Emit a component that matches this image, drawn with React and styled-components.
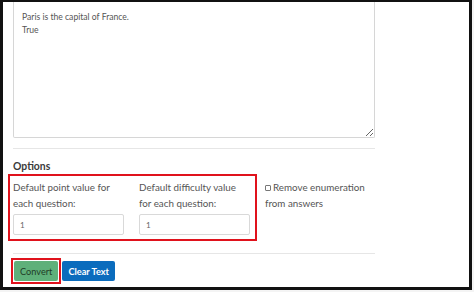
import React from "react";
import styled, { createGlobalStyle } from "styled-components";

const Global = createGlobalStyle`
  html, body { margin: 0; padding: 0; background: #f4f4f4; }
  body { font-family: Lato, "Open Sans", sans-serif; }
  * { box-sizing: border-box; }
`;

const Frame = styled.div`
  width: 472px;
  height: 290px;
  border: 3px solid #111;
  border-top-width: 2px;
  background: #fff;
  overflow: hidden;
`;

const Column = styled.div`
  width: 372px;
  padding: 0 0 0 10px;
  display: flex;
  flex-direction: column;
`;

const TextArea = styled.textarea`
  display: block;
  width: 362px;
  height: 136px;
  margin: 0;
  padding: 9px 8px;
  border: 1px solid #d6d6d6;
  border-top: none;
  border-radius: 0 0 2px 2px;
  font-family: Lato, sans-serif;
  font-size: 8.6px;
  line-height: 13px;
  color: #555;
  resize: vertical;
  outline: none;
`;

const Rule = styled.hr`
  width: 362px;
  margin: ${(p) => p.$mt}px 0 0 0;
  border: none;
  border-top: 1px solid #e6e6e6;
  height: 0;
`;

const Heading = styled.div`
  margin-top: 10px;
  font-size: 10.4px;
  font-weight: 700;
  color: #3a3a3a;
  line-height: 14px;
`;

const OptionsRow = styled.div`
  display: flex;
  align-items: flex-start;
  margin-top: 1px;
  gap: 8px;
`;

const Highlight = styled.div`
  display: flex;
  gap: 15px;
  margin-left: -5px;
  padding: 2px 5px 4px 3px;
  border: 2px solid #e0121c;
`;

const Field = styled.label`
  display: flex;
  flex-direction: column;
  width: 111px;
`;

const LabelText = styled.span`
  font-size: 9.8px;
  line-height: 16px;
  color: #555;
  padding-top: 1px;
`;

const Input = styled.input`
  margin-top: 3px;
  width: 111px;
  height: 21px;
  padding: 0 6px;
  border: 1px solid #d9d9d9;
  border-radius: 2px;
  font-family: Lato, sans-serif;
  font-size: 8px;
  color: #666;
  outline: none;
`;

const CheckLabel = styled.label`
  display: block;
  width: 112px;
  padding-top: 5px;
  font-size: 9.8px;
  line-height: 16px;
  color: #555;
`;

const Box = styled.span`
  display: inline-block;
  width: 6px;
  height: 6px;
  margin-right: 2px;
  border: 1px solid #777;
  border-radius: 1px;
  vertical-align: 0px;
`;

const Actions = styled.div`
  display: flex;
  align-items: center;
  gap: 1px;
  margin-top: 4px;
  margin-left: -2px;
`;

const Marked = styled.div`
  display: flex;
  border: 2px solid #e0121c;
  padding: 1px;
`;

const Button = styled.button`
  height: 20px;
  padding: 0 ${(p) => p.$px}px;
  border: none;
  border-radius: 2px;
  font-family: Lato, sans-serif;
  font-size: 9.2px;
  font-weight: ${(p) => (p.$primary ? 700 : 400)};
  color: ${(p) => (p.$primary ? "#fff" : "#1f3d27")};
  background: ${(p) => (p.$primary ? "#0b6cbd" : "#5fb07a")};
  cursor: pointer;
`;

export default function App() {
  return (
    <>
      <Global />
      <Frame>
        <Column>
          <TextArea defaultValue={"Paris is the capital of France.\nTrue"} />
          <Rule $mt={10} />
          <Heading>Options</Heading>
          <OptionsRow>
            <Highlight>
              <Field>
                <LabelText>Default point value for each question:</LabelText>
                <Input defaultValue="1" />
              </Field>
              <Field>
                <LabelText>Default difficulty value for each question:</LabelText>
                <Input defaultValue="1" />
              </Field>
            </Highlight>
            <CheckLabel>
              <Box />
              Remove enumeration from answers
            </CheckLabel>
          </OptionsRow>
          <Rule $mt={12} />
          <Actions>
            <Marked>
              <Button $px={6}>Convert</Button>
            </Marked>
            <Button $primary $px={6}>Clear Text</Button>
          </Actions>
        </Column>
      </Frame>
    </>
  );
}
